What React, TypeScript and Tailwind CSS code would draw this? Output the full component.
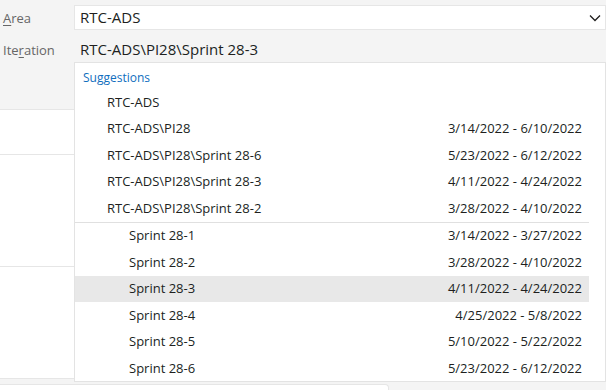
import React from 'react';

type Item = { name: string; dates?: string; active?: boolean };

const parents: Item[] = [
  { name: 'RTC-ADS' },
  { name: 'RTC-ADS\\PI28', dates: '3/14/2022 - 6/10/2022' },
  { name: 'RTC-ADS\\PI28\\Sprint 28-6', dates: '5/23/2022 - 6/12/2022' },
  { name: 'RTC-ADS\\PI28\\Sprint 28-3', dates: '4/11/2022 - 4/24/2022' },
  { name: 'RTC-ADS\\PI28\\Sprint 28-2', dates: '3/28/2022 - 4/10/2022' },
];

const sprints: Item[] = [
  { name: 'Sprint 28-1', dates: '3/14/2022 - 3/27/2022' },
  { name: 'Sprint 28-2', dates: '3/28/2022 - 4/10/2022' },
  { name: 'Sprint 28-3', dates: '4/11/2022 - 4/24/2022', active: true },
  { name: 'Sprint 28-4', dates: '4/25/2022 - 5/8/2022' },
  { name: 'Sprint 28-5', dates: '5/10/2022 - 5/22/2022' },
  { name: 'Sprint 28-6', dates: '5/23/2022 - 6/12/2022' },
];

const Row: React.FC<{ item: Item; indent: string }> = ({ item, indent }) => (
  <div
    className={`flex h-[26.5px] items-center justify-between pr-[7px] ${indent} ${
      item.active ? 'bg-[#e8e8e8]' : ''
    }`}
  >
    <span>{item.name}</span>
    {item.dates && <span>{item.dates}</span>}
  </div>
);

export default function App() {
  return (
    <div className="relative h-[390px] w-[606px] overflow-hidden bg-[#f4f4f4] font-['Segoe_UI','Open_Sans',sans-serif] text-[#201f1e]">
      {/* Area */}
      <div className="flex h-[30px] items-end">
        <div className="w-[74px] pb-[2px] pl-[3px] text-[13px] text-[#666]">
          <span className="underline underline-offset-2">A</span>rea
        </div>
        <div className="flex h-[25px] flex-1 items-center justify-between border border-[#e6e6e6] bg-white pl-[5px] pr-[4px] text-[15px]">
          <span>RTC-ADS</span>
          <svg width="12" height="8" viewBox="0 0 12 8" fill="none">
            <path d="M1 1.5 L6 6.5 L11 1.5" stroke="#201f1e" strokeWidth="1.3" />
          </svg>
        </div>
      </div>

      {/* Iteration */}
      <div className="flex h-[32px] items-start pt-[8px]">
        <div className="w-[74px] pl-[3px] pt-[3px] text-[13px] text-[#666]">
          Ite<span className="underline underline-offset-2">r</span>ation
        </div>
        <div className="pl-[6px] text-[15px]">RTC-ADS\PI28\Sprint 28-3</div>
      </div>

      {/* left column beneath the dropdown */}
      <div className="h-[48px] w-[74px] border-b border-[#e6e6e6]" />
      <div className="w-[75px] border-r border-[#e6e6e6] bg-white">
        <div className="h-[45px] border-b border-[#e6e6e6]" />
        <div className="h-[112px] border-b border-[#e6e6e6]" />
        <div className="h-[112px] border-b border-[#e6e6e6]" />
      </div>
      <div className="mt-[5px] h-[10px] w-[389px] rounded-tr-[4px] border-t border-r border-[#e6e6e6] bg-white" />

      {/* suggestions dropdown */}
      <div className="absolute left-[74px] top-[62px] h-[320px] w-[532px] border border-[#e3e3e3] bg-white text-[13px]">
        <div className="w-[514px]">
          <div className="h-[26px] pl-[8px] pt-[6px] text-[12px] text-[#106ebe]">Suggestions</div>
          {parents.map((p) => (
            <Row key={p.name} item={p} indent="pl-[32px]" />
          ))}
          <div className="border-t border-[#e0e0e0]" />
          {sprints.map((s) => (
            <Row key={s.name} item={s} indent="pl-[54px]" />
          ))}
        </div>
      </div>
    </div>
  );
}
